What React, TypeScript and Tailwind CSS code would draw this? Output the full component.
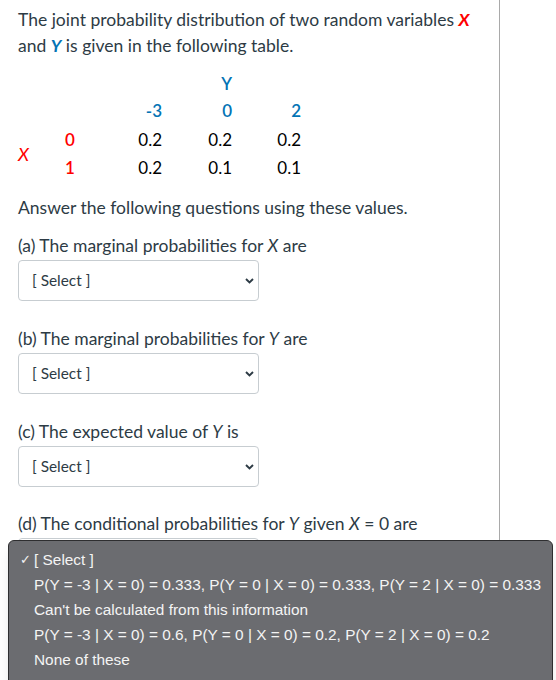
import React from "react";

const options = [
  "[ Select ]",
  "P(Y = -3 | X = 0) = 0.333, P(Y = 0 | X = 0) = 0.333, P(Y = 2 | X = 0) = 0.333",
  "Can't be calculated from this information",
  "P(Y = -3 | X = 0) = 0.6, P(Y = 0 | X = 0) = 0.2, P(Y = 2 | X = 0) = 0.2",
  "None of these",
];

const Chevron = () => (
  <svg width="9" height="6" viewBox="0 0 9 6" className="shrink-0">
    <path d="M1 1l3.5 3.5L8 1" fill="none" stroke="#2d3b45" strokeWidth="1.9" />
  </svg>
);

const SelectBox = () => (
  <div className="mt-[2px] flex h-[41px] w-[241px] items-center justify-between rounded-[4px] border border-[#c7cdd1] bg-white pl-[13px] pr-[4px] text-[15.4px] text-[#2d3b45]">
    <span>[ Select ]</span>
    <Chevron />
  </div>
);

const Question = ({ label, gap }: { label: React.ReactNode; gap: string }) => (
  <div className={gap}>
    <p className="leading-[24px]">{label}</p>
    <SelectBox />
  </div>
);

export default function App() {
  return (
    <div className="relative min-h-[680px] w-[556px] overflow-hidden bg-white font-['Lato',sans-serif] text-[17.5px] text-[#2d3b45]">
      <div className="min-h-[680px] w-[500px] border-r border-[#a9a9a9] pl-[18px] pr-[20px] pt-[7px]">
        <p className="leading-[26px]">
          The joint probability distribution of two random variables{" "}
          <b className="italic text-[#ff0000]">X</b> and{" "}
          <b className="italic text-[#0374b5]">Y</b> is given in the following table.
        </p>

        <div className="mt-[13px] grid grid-cols-[32px_40px_72px_70px_69px] grid-rows-[24px_30px_28px_28px] items-center text-[17px]">
          <div className="col-start-4 row-start-1 text-right font-semibold text-[#0374b5]">Y</div>
          <div className="col-start-3 row-start-2 text-right font-semibold text-[#0374b5]">-3</div>
          <div className="col-start-4 row-start-2 text-right font-semibold text-[#0374b5]">0</div>
          <div className="col-start-5 row-start-2 text-right font-semibold text-[#0374b5]">2</div>

          <div className="col-start-1 row-span-2 row-start-3 text-[18px] italic text-[#ff0000]">X</div>
          <div className="col-start-2 row-start-3 text-center font-semibold text-[#ff0000]">0</div>
          <div className="col-start-3 row-start-3 text-right text-black">0.2</div>
          <div className="col-start-4 row-start-3 text-right text-black">0.2</div>
          <div className="col-start-5 row-start-3 text-right text-black">0.2</div>
          <div className="col-start-2 row-start-4 text-center font-semibold text-[#ff0000]">1</div>
          <div className="col-start-3 row-start-4 text-right text-black">0.2</div>
          <div className="col-start-4 row-start-4 text-right text-black">0.1</div>
          <div className="col-start-5 row-start-4 text-right text-black">0.1</div>
        </div>

        <p className="mt-[14px] leading-[24px]">Answer the following questions using these values.</p>

        <div className="mt-[14px]">
          <p className="leading-[24px]">
            (a) The marginal probabilities for <i>X</i> are
          </p>
          <SelectBox />
        </div>
        <Question gap="mt-[26px]" label={<>(b) The marginal probabilities for <i>Y</i> are</>} />
        <Question gap="mt-[26px]" label={<>(c) The expected value of <i>Y</i> is</>} />
        <Question gap="mt-[25px]" label={<>(d) The conditional probabilities for <i>Y</i> given <i>X</i> = 0 are</>} />
      </div>

      <div className="absolute left-[8px] top-[540px] h-[170px] w-[545px] rounded-[6px] border border-[#2e2e30] bg-[#6b6c70] pt-[6px] font-['Liberation_Sans',Arial,sans-serif] text-[15.4px] text-[#f4f4f4] shadow-lg">
        {options.map((o, i) => (
          <div key={o} className="flex h-[25px] items-center">
            <span className="w-[25px] pl-[11px] text-[13px]">{i === 0 ? "✓" : ""}</span>
            <span>{o}</span>
          </div>
        ))}
      </div>
    </div>
  );
}
